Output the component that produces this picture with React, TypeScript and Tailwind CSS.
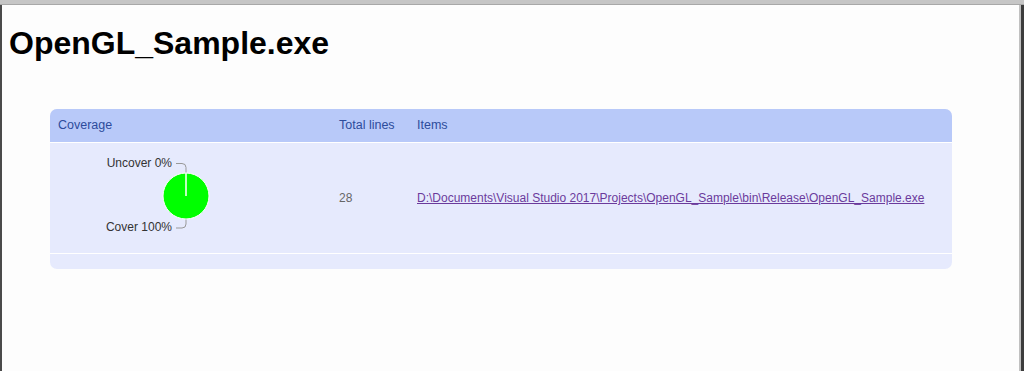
const font = { fontFamily: '"Liberation Sans", Arial, sans-serif' }

const CoveragePie = () => (
  <svg width="281" height="110" viewBox="0 0 281 110" className="block">
    <text x="122" y="24" textAnchor="end" fontSize="12" fill="#333" fontFamily='"Liberation Sans", Arial, sans-serif'>
      Uncover 0%
    </text>
    <text x="122" y="88" textAnchor="end" fontSize="12" fill="#333" fontFamily='"Liberation Sans", Arial, sans-serif'>
      Cover 100%
    </text>
    <path d="M126 20.5 H132 Q136 20.5 136 24.5 V30" fill="none" stroke="#999" strokeWidth="1" />
    <path d="M136 76 V81 Q136 85 132 85 H126" fill="none" stroke="#999" strokeWidth="1" />
    <circle cx="136" cy="53" r="23" fill="#00ff00" stroke="#ffffff" strokeWidth="1" />
    <line x1="136" y1="53" x2="136" y2="30" stroke="#ffffff" strokeWidth="1.5" />
  </svg>
)

export default function App() {
  return (
    <div className="flex h-[371px] w-[1024px] flex-col overflow-hidden bg-white" style={font}>
      <div className="h-[4px] bg-[#c6c6c6]" />
      <div className="h-px bg-[#a8a8a8]" />
      <div className="flex flex-1">
        <div className="w-[2px] bg-[#4a4a4a]" />
        <main className="flex-1 bg-[#fdfdfd]">
          <h1 className="ml-[7px] mt-[20px] text-[32px] font-bold leading-[37px] text-black">OpenGL_Sample.exe</h1>
          <div className="ml-[48px] mt-[47px] w-[902px] overflow-hidden rounded-[7px] bg-[#e6eafd]">
            <div className="grid h-[33px] grid-cols-[281px_78px_1fr] items-center bg-[#b8c9f9] text-[12.5px] text-[#2d4c9c]">
              <div className="pl-[8px]">Coverage</div>
              <div className="pl-[8px]">Total lines</div>
              <div className="pl-[8px]">Items</div>
            </div>
            <div className="h-px bg-white" />
            <div className="grid h-[110px] grid-cols-[281px_78px_1fr] items-center">
              <CoveragePie />
              <div className="pl-[8px] text-[12px] text-[#666]">28</div>
              <div className="pl-[8px] text-[12px]">
                <a href="#" className="text-[#6b3a9c] underline">
                  D:\Documents\Visual Studio 2017\Projects\OpenGL_Sample\bin\Release\OpenGL_Sample.exe
                </a>
              </div>
            </div>
            <div className="h-px bg-white" />
            <div className="h-[15px]" />
          </div>
        </main>
        <div className="w-[2px] bg-[#c0c0c0]" />
        <div className="w-[3px] bg-[#3c3c3c]" />
      </div>
    </div>
  )
}
